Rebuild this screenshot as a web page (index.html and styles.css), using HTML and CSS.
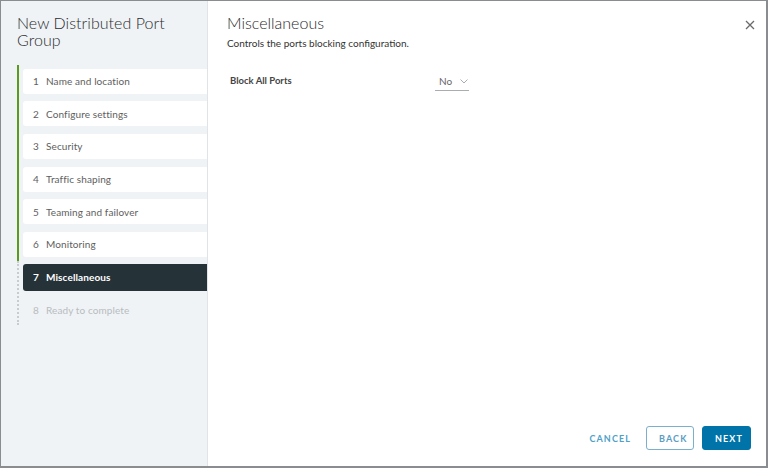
FILE: index.html
```html
<!DOCTYPE html>
<html>
<head>
<meta charset="utf-8">
<link rel="stylesheet" href="styles.css">
</head>
<body>
<div class="modal">
  <aside class="sidebar">
    <h1 class="side-title">New Distributed Port Group</h1>
    <div class="steps">
      <div class="track">
        <div class="track-done"></div>
        <div class="track-todo"></div>
      </div>
      <ol class="step-list">
        <li class="step"><span class="num">1</span>Name and location</li>
        <li class="step"><span class="num">2</span>Configure settings</li>
        <li class="step"><span class="num">3</span>Security</li>
        <li class="step"><span class="num">4</span>Traffic shaping</li>
        <li class="step"><span class="num">5</span>Teaming and failover</li>
        <li class="step"><span class="num">6</span>Monitoring</li>
        <li class="step active"><span class="num">7</span>Miscellaneous</li>
        <li class="step disabled"><span class="num">8</span>Ready to complete</li>
      </ol>
    </div>
  </aside>
  <main class="content">
    <header class="head">
      <h2 class="title">Miscellaneous</h2>
      <button class="close" aria-label="Close">
        <svg width="10" height="10" viewBox="0 0 10 10"><path d="M1 1L9 9M9 1L1 9" stroke="#6a6a6a" stroke-width="1.3" fill="none"/></svg>
      </button>
    </header>
    <p class="desc">Controls the ports blocking configuration.</p>
    <div class="form-row">
      <label class="label">Block All Ports</label>
      <div class="select">
        <span>No</span>
        <svg width="8" height="5" viewBox="0 0 8 5"><path d="M0.5 0.5L4 4L7.5 0.5" stroke="#9aa4aa" stroke-width="0.9" fill="none"/></svg>
      </div>
    </div>
    <div class="spacer"></div>
    <footer class="footer">
      <button class="btn link">CANCEL</button>
      <button class="btn outline">BACK</button>
      <button class="btn primary">NEXT</button>
    </footer>
  </main>
</div>
</body>
</html>
```
FILE: styles.css
```css
* { box-sizing: border-box; }
html, body { margin: 0; padding: 0; }
body {
  width: 768px;
  height: 468px;
  font-family: "Lato", "Noto Sans", sans-serif;
  color: #333;
  background: #fff;
}
.modal {
  width: 768px;
  height: 468px;
  display: flex;
  border: 1px solid #8a8d8f;
  border-bottom-width: 2px;
  border-right-width: 2px;
  background: #fff;
}
.sidebar {
  width: 207px;
  flex: none;
  background: #eff3f6;
  border-right: 1px solid #e0e4e7;
  padding: 14px 0 0 16px;
}
.side-title {
  margin: 0;
  font-weight: 300;
  font-size: 16px;
  line-height: 16.5px;
  color: #2b2b2b;
  letter-spacing: 0.05px;
}
.steps {
  display: flex;
  margin-top: 16.5px;
}
.track {
  width: 2px;
  flex: none;
  display: flex;
  flex-direction: column;
  margin-right: 4px;
}
.track-done {
  height: 196px;
  background: #5a9a1f;
}
.track-todo {
  height: 64px;
  border-left: 2px dotted #c8ccce;
}
.step-list {
  list-style: none;
  margin: 4px 0 0 0;
  padding: 0;
  flex: 1;
  display: flex;
  flex-direction: column;
  gap: 7.7px;
}
.step {
  height: 25px;
  background: #fff;
  border-radius: 3px 0 0 3px;
  display: flex;
  align-items: center;
  padding-left: 10px;
  font-size: 10px;
  color: #5e5e5e;
  letter-spacing: 0.1px;
}
.num { width: 13px; }
.step.active {
  background: #253238;
  color: #fff;
  font-weight: 700;
  height: 27px;
  margin-top: -1px;
  margin-bottom: -1px;
}
.step.disabled {
  background: transparent;
  color: #b8bcbe;
}
.content {
  flex: 1;
  display: flex;
  flex-direction: column;
  padding: 12px 15px 15px 19px;
}
.head {
  display: flex;
  justify-content: space-between;
  align-items: flex-start;
}
.title {
  margin: 0;
  font-weight: 300;
  font-size: 16px;
  line-height: 20px;
  color: #2b2b2b;
}
.close {
  border: 0;
  background: none;
  padding: 0;
  margin-top: 7px;
  margin-right: -4px;
  width: 10px;
  height: 10px;
  display: flex;
}
.desc {
  margin: 3px 0 0 0;
  font-size: 10px;
  line-height: 14px;
  color: #333;
}
.form-row {
  display: flex;
  align-items: center;
  margin-top: 19px;
  padding-left: 3px;
}
.label {
  width: 205px;
  font-size: 9.5px;
  font-weight: 700;
  color: #454545;
}
.select {
  display: flex;
  align-items: center;
  gap: 8px;
  width: 34px;
  padding: 0 0 3px 4px;
  border-bottom: 1px solid #a8adb0;
  font-size: 10px;
  color: #666;
  margin-top: 6px;
}
.spacer { flex: 1; }
.footer {
  display: flex;
  justify-content: flex-end;
  align-items: center;
  gap: 8px;
  margin-bottom: 1px;
}
.btn {
  font-family: inherit;
  font-size: 9px;
  font-weight: 700;
  letter-spacing: 1.1px;
  height: 24px;
  border-radius: 3px;
  padding: 0 12px;
  cursor: pointer;
}
.btn.link {
  background: none;
  border: 1px solid transparent;
  color: #4e9fc9;
  padding: 0 4px;
  margin-right: 2px;
  letter-spacing: 1.1px;
}
.btn.outline {
  background: #fff;
  border: 1px solid #7ab0cc;
  color: #5a9dc3;
  width: 48px;
}
.btn.primary {
  background: #0073a8;
  border: 1px solid #0073a8;
  color: #fff;
  width: 49px;
}
```
